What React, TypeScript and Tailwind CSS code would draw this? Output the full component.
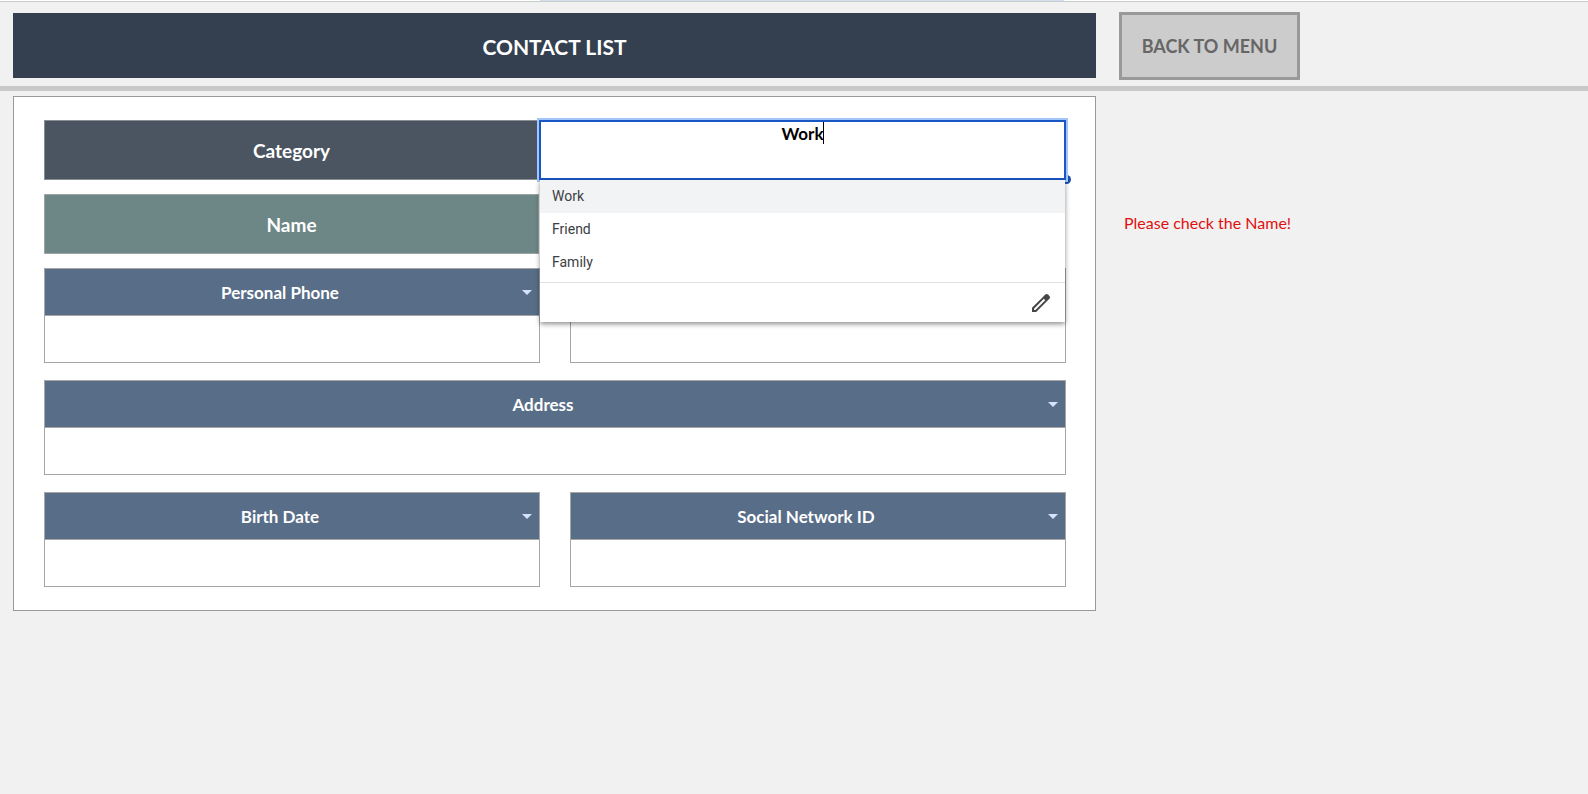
import { useState } from "react";

const CATEGORIES = ["Work", "Friend", "Family"];

function DropArrow({ label }: { label: string }) {
  return (
    <button type="button" aria-label={`${label} options`} className="flex h-full w-6 items-center justify-center">
      <svg viewBox="0 0 10 5" className="h-[5px] w-[10px]" aria-hidden="true">
        <path d="M0 0h10L5 5z" fill="#d3e3fd" />
      </svg>
    </button>
  );
}

function Field({ id, label }: { id: string; label: string }) {
  return (
    <div className="border border-[#a6a6a6]">
      <div className="flex h-[46px] items-center bg-[#586d87]">
        <label htmlFor={id} className="flex-1 pt-[2px] text-center text-[17px] font-bold text-white">
          {label}
        </label>
        <DropArrow label={label || "Phone"} />
      </div>
      <input
        id={id}
        type="text"
        aria-label={label || "Phone"}
        className="block h-[47px] w-full border-t border-[#a6a6a6] bg-white px-2 text-center text-[17px] outline-none"
      />
    </div>
  );
}

function CategoryEditor() {
  const [value, setValue] = useState("Work");

  return (
    <div className="relative z-10 h-[60px]">
      <span className="absolute -right-[5px] -bottom-[4px] h-[9px] w-[9px] rounded-full bg-[#174ea6]" />
      <div className="relative h-full border-2 border-[#1a56c4] bg-white ring-2 ring-[#a3c5fa]">
        <input
          id="category"
          type="text"
          value={value}
          onChange={(e) => setValue(e.target.value)}
          className="block h-6 w-full text-center text-[17px] leading-6 font-bold text-black outline-none"
        />
        <span className="absolute top-0 left-1/2 ml-[20px] h-[22px] w-px bg-black" />
      </div>

      <div className="absolute inset-x-px top-full bg-white shadow-[0_2px_5px_rgba(0,0,0,0.45)]">
        <ul role="listbox" aria-label="Category" className="pb-[3px]">
          {CATEGORIES.map((item) => (
            <li key={item} role="option" aria-selected={item === value}>
              <button
                type="button"
                onClick={() => setValue(item)}
                className={`block h-[33px] w-full px-3 pb-[2px] text-left font-[Roboto,sans-serif] text-sm text-[#3c4043] ${
                  item === value ? "bg-[#f1f3f4]" : "bg-white"
                }`}
              >
                {item}
              </button>
            </li>
          ))}
        </ul>
        <div className="flex h-10 items-center justify-end border-t border-[#e0e0e0] pr-3">
          <button type="button" aria-label="Edit list">
            <svg viewBox="0 0 24 24" className="h-6 w-6" fill="#444746" aria-hidden="true">
              <path d="M20.41 4.94l-1.35-1.35c-.78-.78-2.05-.78-2.83 0L13.4 6.41 3 16.82V21h4.18l10.46-10.46 2.77-2.77c.79-.78.79-2.05 0-2.83zm-14 14.12L5 19v-1.36l9.82-9.82 1.41 1.41-9.82 9.83z" />
            </svg>
          </button>
        </div>
      </div>
    </div>
  );
}

export default function App() {
  return (
    <div className="min-h-screen bg-[#f1f1f1] font-[Lato,sans-serif]">
      {/* bottom edge of the column header strip */}
      <div className="flex h-[2px] border-b border-[#c8ccca] bg-white">
        <div className="w-[34%]" />
        <div className="w-[33%] bg-[#d3dfee]" />
      </div>

      <header className="grid grid-cols-[1083fr_469fr] gap-[23px] border-b-[5px] border-[#c8c8c8] pt-[10px] pb-[6px] pl-[13px]">
        <h1 className="mt-px flex h-[65px] items-center justify-center bg-[#343f4f] pt-[2px] text-[21px] font-bold text-white">
          CONTACT LIST
        </h1>
        <div>
          <button
            type="button"
            className="block h-[68px] w-[181px] border-[3px] border-[#999999] bg-[#cccccc] text-[18px] font-bold text-[#666666]"
          >
            BACK TO MENU
          </button>
        </div>
      </header>

      <div className="grid grid-cols-[1083fr_469fr] gap-[23px] pt-[5px] pl-[13px]">
        <main className="border border-[#999999] bg-white pt-[23px] pr-[29px] pb-[23px] pl-[30px]">
          <div className="grid grid-cols-[495fr_527fr]">
            <label
              htmlFor="category"
              className="flex h-[60px] items-center justify-center border border-[#8a8f96] bg-[#4a5561] pt-[2px] text-[19px] font-bold text-white"
            >
              Category
            </label>
            <CategoryEditor />
          </div>

          <div className="mt-[14px] grid grid-cols-[495fr_527fr]">
            <label
              htmlFor="name"
              className="flex h-[60px] items-center justify-center border border-[#9aa5a3] bg-[#6d8786] pt-[2px] text-[19px] font-bold text-white"
            >
              Name
            </label>
            <input id="name" type="text" className="h-[60px] w-full px-2 text-center outline-none" />
          </div>

          <div className="mt-[14px] grid grid-cols-2 gap-[30px]">
            <Field id="personal-phone" label="Personal Phone" />
            <Field id="phone" label="" />
          </div>
          <div className="mt-[17px]">
            <Field id="address" label="Address" />
          </div>
          <div className="mt-[17px] grid grid-cols-2 gap-[30px]">
            <Field id="birth-date" label="Birth Date" />
            <Field id="social-network" label="Social Network ID" />
          </div>
        </main>

        <aside className="pt-[115px] pl-[5px]">
          <p role="alert" className="text-base leading-6 text-[#e01010]">
            Please check the Name!
          </p>
        </aside>
      </div>
    </div>
  );
}
